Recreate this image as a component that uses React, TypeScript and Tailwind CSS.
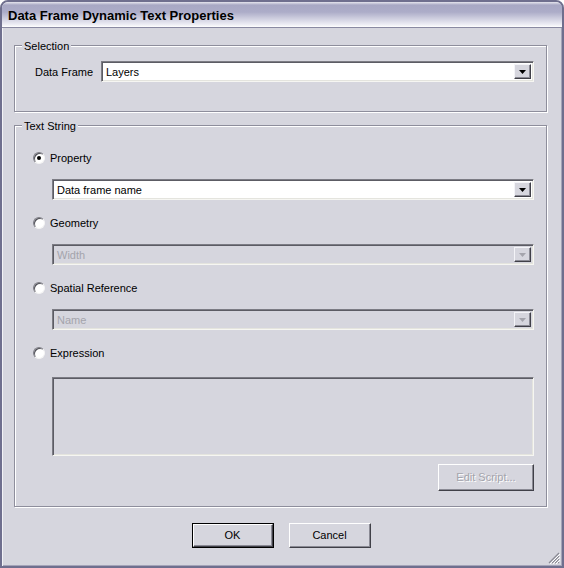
import React from "react";

const font = "font-['Liberation_Sans','Arial',sans-serif]";

function Arrow({ disabled }: { disabled?: boolean }) {
  return (
    <div className="flex h-full w-[17px] items-center justify-center border border-t-[#f4f4f8] border-l-[#f4f4f8] border-b-[#404048] border-r-[#404048] bg-[#d6d6de] shadow-[inset_-1px_-1px_0_#8a8a94]">
      <svg width="7" height="4" viewBox="0 0 7 4">
        <polygon points="0,0 7,0 3.5,4" fill={disabled ? "#a4a4ac" : "#000"} />
      </svg>
    </div>
  );
}

function Combo({ value, disabled, className }: { value: string; disabled?: boolean; className?: string }) {
  return (
    <div
      className={`flex h-[21px] items-stretch border border-t-[#7c7c84] border-l-[#7c7c84] border-b-[#f6f6f2] border-r-[#f6f6f2] shadow-[inset_1px_1px_0_#5c5c64,inset_-1px_-1px_0_#e4e4de] p-[2px] ${
        disabled ? "bg-[#d6d6de]" : "bg-white"
      } ${className ?? ""}`}
    >
      <div className={`flex flex-1 items-center pl-[2px] pt-[1px] text-[11px] ${disabled ? "text-[#a4a4ac]" : "text-black"}`}>{value}</div>
      <Arrow disabled={disabled} />
    </div>
  );
}

function Radio({ label, checked }: { label: string; checked?: boolean }) {
  return (
    <div className="flex h-[16px] items-center gap-[5px] pl-[18px]">
      <div className="flex h-[12px] w-[12px] items-center justify-center rounded-full border border-t-[#7c7c84] border-l-[#7c7c84] border-b-[#f4f4f4] border-r-[#f4f4f4] bg-white shadow-[inset_1px_1px_0_#505058]">
        {checked && <div className="h-[4px] w-[4px] rounded-full bg-black" />}
      </div>
      <span className="pt-[1px] text-[11px] text-black">{label}</span>
    </div>
  );
}

function Group({ title, className, children }: { title: string; className?: string; children: React.ReactNode }) {
  return (
    <div className={`relative w-[533px] border border-[#8e8e9c] shadow-[1px_1px_0_#ffffff,inset_1px_1px_0_#ffffff] ${className ?? ""}`}>
      <span className="absolute -top-[7px] left-[7px] bg-[#d6d6de] px-[2px] text-[11px] leading-[14px] text-black">{title}</span>
      {children}
    </div>
  );
}

function Button({ label, isDefault, disabled, className }: { label: string; isDefault?: boolean; disabled?: boolean; className?: string }) {
  const inner = (
    <div className="flex h-full w-full items-center justify-center border border-t-[#ffffff] border-l-[#ffffff] border-b-[#404048] border-r-[#404048] bg-[#d6d6de] shadow-[inset_-1px_-1px_0_#8a8a94]">
      <span className={`text-[11px] ${disabled ? "text-[#a4a4ac] [text-shadow:1px_1px_0_#ffffff]" : "text-black"}`}>{label}</span>
    </div>
  );
  return isDefault ? (
    <div className={`border border-black ${className ?? ""}`}>{inner}</div>
  ) : (
    <div className={className}>{inner}</div>
  );
}

export default function App() {
  return (
    <div className={`h-[568px] w-[564px] bg-white ${font}`}>
      <div className="relative flex h-full flex-col rounded-t-[8px] border-2 border-[#6f6f8e] bg-[#d6d6de] shadow-[inset_1px_1px_0_#f2f2f6,inset_-1px_-1px_0_#a4a4b8]">
        <div className="flex h-[26px] items-center rounded-t-[6px] border-b border-[#8a8aa2] bg-[linear-gradient(to_bottom,#e6e6ee_0px,#a8a8c4_3px,#acacc8_10px,#f0f0f6_23px,#ffffff_25px)] pl-[6px] pt-[3px]">
          <span className="text-[13px] font-bold text-black">Data Frame Dynamic Text Properties</span>
        </div>

        <div className="flex flex-col pl-[12px]">
          <Group title="Selection" className="mt-[17px] h-[67px]">
            <div className="flex items-center pt-[15px] pl-[20px]">
              <span className="w-[66px] pt-[1px] text-[11px] text-black">Data Frame</span>
              <Combo value="Layers" className="w-[433px]" />
            </div>
          </Group>

          <Group title="Text String" className="mt-[13px] h-[382px]">
            <div className="flex flex-col pt-[24px]">
              <Radio label="Property" checked />
              <Combo value="Data frame name" className="ml-[37px] mt-[13px] w-[482px]" />
              <div className="mt-[15px]">
                <Radio label="Geometry" />
              </div>
              <Combo value="Width" disabled className="ml-[37px] mt-[13px] w-[482px]" />
              <div className="mt-[15px]">
                <Radio label="Spatial Reference" />
              </div>
              <Combo value="Name" disabled className="ml-[37px] mt-[13px] w-[482px]" />
              <div className="mt-[15px]">
                <Radio label="Expression" />
              </div>
              <div className="ml-[37px] mt-[16px] h-[79px] w-[482px] border border-t-[#7c7c84] border-l-[#7c7c84] border-b-[#f6f6f2] border-r-[#f6f6f2] bg-[#d6d6de] shadow-[inset_1px_1px_0_#5c5c64,inset_-1px_-1px_0_#e4e4de]" />
              <div className="mt-[8px] flex justify-end pr-[12px]">
                <Button label="Edit Script..." disabled className="h-[27px] w-[96px]" />
              </div>
            </div>
          </Group>
        </div>

        <div className="mt-[16px] flex justify-center gap-[15px] pr-[2px]">
          <Button label="OK" isDefault className="h-[25px] w-[82px]" />
          <Button label="Cancel" className="h-[25px] w-[82px]" />
        </div>

        <svg className="absolute bottom-[2px] right-[2px]" width="12" height="12" viewBox="0 0 12 12">
          <path d="M11 1 L1 11 M11 4 L4 11 M11 7 L7 11 M11 10 L10 11" stroke="#8a8a94" strokeWidth="1.2" />
          <path d="M12 2 L2 12 M12 5 L5 12 M12 8 L8 12" stroke="#ffffff" strokeWidth="1" />
        </svg>
      </div>
    </div>
  );
}
